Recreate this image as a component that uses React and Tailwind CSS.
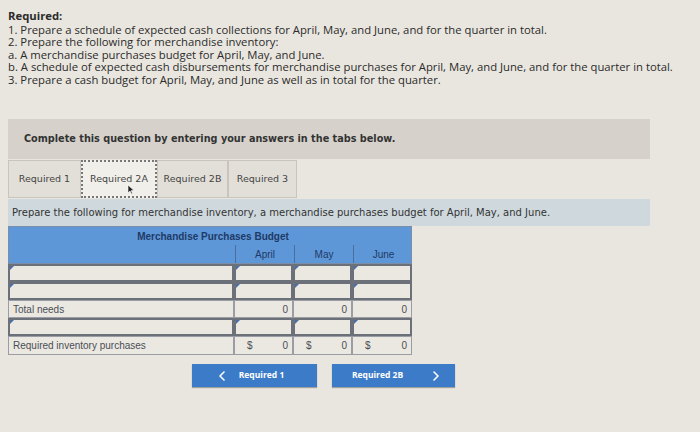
const lines = [
  '1. Prepare a schedule of expected cash collections for April, May, and June, and for the quarter in total.',
  '2. Prepare the following for merchandise inventory:',
  'a. A merchandise purchases budget for April, May, and June.',
  'b. A schedule of expected cash disbursements for merchandise purchases for April, May, and June, and for the quarter in total.',
  '3. Prepare a cash budget for April, May, and June as well as in total for the quarter.',
]

const tabs = [
  { label: 'Required 1', w: 'w-[73px]' },
  { label: 'Required 2A', w: 'w-[76px]', active: true },
  { label: 'Required 2B', w: 'w-[71px]' },
  { label: 'Required 3', w: 'w-[69px]' },
]

function Flag() {
  return <span className="absolute left-0 top-0 w-0 h-0 border-t-[4px] border-t-[#4a6fa8] border-r-[4px] border-r-transparent" />
}

function InputRow() {
  return (
    <>
      <div className="relative h-[18px] border-2 border-[#6b7079] bg-[#ebe8e2]"><Flag /></div>
      {[0, 1, 2].map(i => (
        <div key={i} className="relative h-[18px] border-2 border-[#6b7079] bg-[#ebe8e2]"><Flag /></div>
      ))}
    </>
  )
}

function ValueRow({ label, dollar, tall }) {
  const h = tall ? 'h-[19px]' : 'h-[18px]'
  return (
    <>
      <div className={`${h} border border-[#9a9ea4] bg-[#ebe8e2] px-1 flex items-center text-[#4a4e55]`}>{label}</div>
      {[0, 1, 2].map(i => (
        <div key={i} className={`${h} border border-[#9a9ea4] bg-[#ebe8e2] px-1 flex items-center justify-between text-[#4a4e55]`}>
          <span className="pl-2">{dollar ? '$' : ''}</span>
          <span>0</span>
        </div>
      ))}
    </>
  )
}

function Chevron({ dir }) {
  return (
    <svg width="6" height="10" viewBox="0 0 6 10" fill="none" stroke="white" strokeWidth="1.6" strokeLinecap="round" strokeLinejoin="round">
      {dir === 'left' ? <path d="M5 1 L1 5 L5 9" /> : <path d="M1 1 L5 5 L1 9" />}
    </svg>
  )
}

export default function App() {
  return (
    <div className="w-[700px] h-[432px] bg-[#e9e6df] overflow-hidden text-[#2b2b2b]">
      <div className="pl-[8px] pt-[10px] font-['Open_Sans',sans-serif] text-[11.3px] leading-[12.5px]">
        <div className="font-bold mb-[1px]">Required:</div>
        {lines.map((l, i) => (
          <div key={i}>{l}</div>
        ))}
      </div>

      <div className="ml-[8px] w-[642px] mt-[33px]">
        <div className="h-[40px] bg-[#d6d2cb] flex items-center pl-[16px] font-['DejaVu_Sans',sans-serif] font-bold text-[9.7px] text-[#333]">
          Complete this question by entering your answers in the tabs below.
        </div>

        <div className="flex h-[39px] pt-[1px] font-['DejaVu_Sans',sans-serif] text-[9.5px] text-[#444]">
          {tabs.map(t => (
            <div
              key={t.label}
              className={`${t.w} flex items-center justify-center relative ${t.active ? 'bg-[#f1efea] border-2 border-dotted border-[#777]' : 'bg-[#e2dfd8] border border-[#c9c5bd]'}`}
            >
              {t.label}
              {t.active && (
                <svg className="absolute left-[44px] top-[22px]" width="8" height="11" viewBox="0 0 8 11">
                  <path d="M1 1 L1 9 L3 7 L4.5 10 L5.5 9.5 L4.2 6.6 L7 6.6 Z" fill="#222" stroke="#fff" strokeWidth="0.6" />
                </svg>
              )}
            </div>
          ))}
        </div>

        <div className="h-[27px] mt-[1px] bg-[#cfd9dd] flex items-center pl-[4px] font-['DejaVu_Sans',sans-serif] text-[10px] text-[#333]">
          Prepare the following for merchandise inventory, a merchandise purchases budget for April, May, and June.
        </div>
      </div>

      <div className="ml-[8px] w-[404px] font-['Liberation_Sans',sans-serif] text-[10px]">
        <div className="grid grid-cols-[226px_59px_59px_60px] bg-[#5e97d8] border border-[#7a8ea8] text-[#1e3a66]">
          <div className="col-span-4 h-[18px] flex items-center justify-center pl-[4px] font-bold">Merchandise Purchases Budget</div>
          <div className="h-[18px]" />
          <div className="h-[18px] flex items-center justify-center border-l border-[#4a6e9e]">April</div>
          <div className="h-[18px] flex items-center justify-center border-l border-[#4a6e9e]">May</div>
          <div className="h-[18px] flex items-center justify-center border-l border-[#4a6e9e]">June</div>
        </div>
        <div className="grid grid-cols-[226px_59px_59px_60px]">
          <InputRow />
          <InputRow />
          <ValueRow label="Total needs" />
          <InputRow />
          <ValueRow label="Required inventory purchases" dollar tall />
        </div>
      </div>

      <div className="flex gap-[15px] ml-[192px] mt-[9px] font-['Open_Sans',sans-serif] font-bold text-[8.5px] text-white">
        <div className="w-[125px] h-[23px] bg-[#3c7bc8] flex items-center justify-center gap-[14px] pr-[6px] shadow-[0_1px_1px_rgba(0,0,0,0.3)]">
          <Chevron dir="left" />
          <span>Required 1</span>
        </div>
        <div className="w-[123px] h-[23px] bg-[#3c7bc8] flex items-center justify-center gap-[30px] pl-[4px] shadow-[0_1px_1px_rgba(0,0,0,0.3)]">
          <span>Required 2B</span>
          <Chevron dir="right" />
        </div>
      </div>
    </div>
  )
}
